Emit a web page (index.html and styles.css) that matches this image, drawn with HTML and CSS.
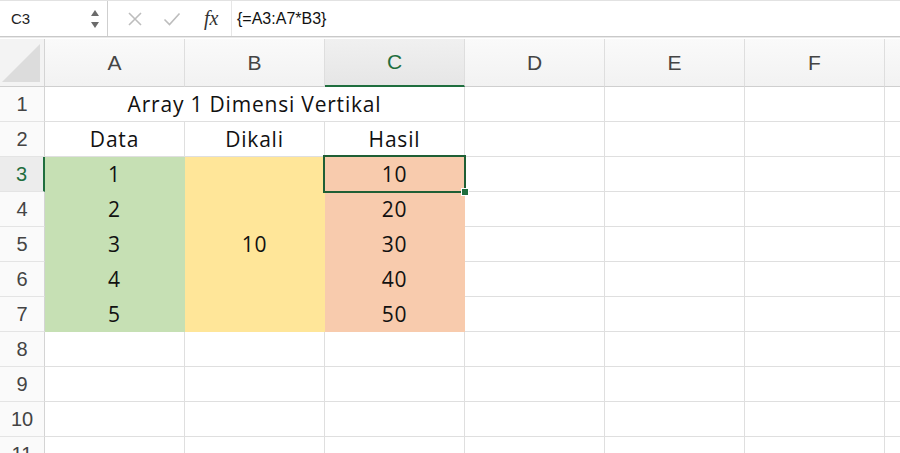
FILE: index.html
```html
<!DOCTYPE html>
<html lang="id">
<head>
    <meta charset="UTF-8">
    <title>Array 1 Dimensi Vertikal</title>
    <link rel="stylesheet" href="styles.css">
</head>
<body>

<div class="formula-bar">
    <div class="name-box">
        <span class="cell-ref">C3</span>
        <span class="spinner">
            <svg width="10" height="22" viewBox="0 0 10 22">
                <path d="M5 2 L9 8 L1 8 Z" fill="#6b6b6b"/>
                <path d="M5 20 L9 14 L1 14 Z" fill="#6b6b6b"/>
            </svg>
        </span>
    </div>
    <div class="bar-buttons">
        <svg class="btn-icon" width="16" height="16" viewBox="0 0 16 16">
            <path d="M2 2 L14 14 M14 2 L2 14" stroke="#bdbdbd" stroke-width="1.6" fill="none"/>
        </svg>
        <svg class="btn-icon" width="18" height="16" viewBox="0 0 18 16">
            <path d="M1.5 8.5 L6.5 13.5 L16.5 2.5" stroke="#bdbdbd" stroke-width="1.6" fill="none"/>
        </svg>
        <span class="fx">fx</span>
    </div>
    <div class="formula">{=A3:A7*B3}</div>
</div>

<div class="sheet">
    <div class="corner"><span class="corner-tri"></span></div>
    <div class="col-head">A</div>
    <div class="col-head">B</div>
    <div class="col-head active">C</div>
    <div class="col-head">D</div>
    <div class="col-head">E</div>
    <div class="col-head">F</div>
    <div class="col-head last"></div>

    <div class="row-head">1</div>
    <div class="cell title">Array 1 Dimensi Vertikal</div>
    <div class="cell"></div><div class="cell"></div><div class="cell"></div><div class="cell last"></div>

    <div class="row-head">2</div>
    <div class="cell">Data</div>
    <div class="cell">Dikali</div>
    <div class="cell">Hasil</div>
    <div class="cell"></div><div class="cell"></div><div class="cell"></div><div class="cell last"></div>

    <div class="row-head active">3</div>
    <div class="cell green">1</div>
    <div class="cell yellow merged">10</div>
    <div class="cell orange selected">10<span class="handle"></span></div>
    <div class="cell"></div><div class="cell"></div><div class="cell"></div><div class="cell last"></div>

    <div class="row-head">4</div>
    <div class="cell green">2</div>
    <div class="cell orange">20</div>
    <div class="cell"></div><div class="cell"></div><div class="cell"></div><div class="cell last"></div>

    <div class="row-head">5</div>
    <div class="cell green">3</div>
    <div class="cell orange">30</div>
    <div class="cell"></div><div class="cell"></div><div class="cell"></div><div class="cell last"></div>

    <div class="row-head">6</div>
    <div class="cell green">4</div>
    <div class="cell orange">40</div>
    <div class="cell"></div><div class="cell"></div><div class="cell"></div><div class="cell last"></div>

    <div class="row-head">7</div>
    <div class="cell green">5</div>
    <div class="cell orange">50</div>
    <div class="cell"></div><div class="cell"></div><div class="cell"></div><div class="cell last"></div>

    <div class="row-head">8</div>
    <div class="cell"></div><div class="cell"></div><div class="cell"></div><div class="cell"></div><div class="cell"></div><div class="cell"></div><div class="cell last"></div>

    <div class="row-head">9</div>
    <div class="cell"></div><div class="cell"></div><div class="cell"></div><div class="cell"></div><div class="cell"></div><div class="cell"></div><div class="cell last"></div>

    <div class="row-head">10</div>
    <div class="cell"></div><div class="cell"></div><div class="cell"></div><div class="cell"></div><div class="cell"></div><div class="cell"></div><div class="cell last"></div>

    <div class="row-head">11</div>
    <div class="cell"></div><div class="cell"></div><div class="cell"></div><div class="cell"></div><div class="cell"></div><div class="cell"></div><div class="cell last"></div>
</div>

</body>
</html>
```

FILE: styles.css
```css
body {
    margin: 0;
    padding: 0;
    background-color: #fff;
    font-family: "Liberation Sans", Arial, sans-serif;
    overflow: hidden;
}

/* formula bar */

.formula-bar {
    display: flex;
    align-items: center;
    height: 35px;
    border-top: 1px solid #e2e2e2;
    border-bottom: 1px solid #c9c9c9;
    box-shadow: 0 1px 0 #e9e9e9;
    background-color: #fff;
}

.name-box {
    display: flex;
    align-items: center;
    justify-content: space-between;
    width: 108px;
    height: 100%;
    padding: 0 7px 0 11px;
    box-sizing: border-box;
    border-right: 1px solid #cfcfcf;
}

.cell-ref {
    font-size: 15px;
    color: #222;
}

.spinner svg {
    display: block;
}

.bar-buttons {
    display: flex;
    align-items: center;
    width: 124px;
    height: 100%;
    padding-left: 19px;
    box-sizing: border-box;
    border-right: 1px solid #e6e6e6;
}

.btn-icon {
    margin-right: 20px;
}

.btn-icon + .btn-icon {
    margin-right: 23px;
}

.fx {
    font-family: "Liberation Serif", "Times New Roman", serif;
    font-style: italic;
    font-size: 20px;
    color: #333;
}

.formula {
    padding-left: 5px;
    font-size: 16px;
    color: #111;
}

/* sheet grid */

.sheet {
    display: grid;
    grid-template-columns: 45px repeat(6, 140px) 1fr;
    grid-template-rows: 48px repeat(11, 35px);
    margin-top: 2px;
}

.corner {
    position: relative;
    background-color: #f3f3f3;
    border-right: 1px solid #d4d4d4;
    border-bottom: 1px solid #cfcfcf;
}

.corner-tri {
    position: absolute;
    right: 4px;
    bottom: 4px;
    width: 0;
    height: 0;
    border-left: 38px solid transparent;
    border-bottom: 38px solid #dcdcdc;
}

.col-head {
    display: flex;
    align-items: center;
    justify-content: center;
    font-size: 21px;
    color: #444;
    background: linear-gradient(#fafafa, #f2f2f2);
    border-right: 1px solid #dedede;
    border-bottom: 1px solid #cfcfcf;
}

.col-head.active {
    color: #1f6e3e;
    background: linear-gradient(#f0f0f0, #e6e6e6);
    border-bottom: 2px solid #1f6e3e;
}

.col-head.last {
    border-right: none;
}

.row-head {
    display: flex;
    align-items: center;
    justify-content: center;
    font-size: 20px;
    color: #444;
    background-color: #fafafa;
    border-right: 1px solid #d4d4d4;
    border-bottom: 1px solid #e4e4e4;
}

.row-head.active {
    color: #1f6e3e;
    background-color: #ececec;
    border-right: 2px solid #1f6e3e;
}

.cell {
    display: flex;
    align-items: center;
    justify-content: center;
    font-family: "Open Sans", "Noto Sans", sans-serif;
    font-size: 21px;
    letter-spacing: 0.8px;
    color: #111;
    border-right: 1px solid #dfdfdf;
    border-bottom: 1px solid #dfdfdf;
}

.cell.last {
    border-right: none;
}

.title {
    grid-column: span 3;
}

.green {
    background-color: #c6e0b4;
    border-color: #c6e0b4;
}

.yellow {
    background-color: #ffe699;
    border-color: #ffe699;
}

.orange {
    background-color: #f8cbad;
    border-color: #f8cbad;
}

.merged {
    grid-row: span 5;
}

.selected {
    position: relative;
}

.selected::after {
    content: "";
    position: absolute;
    top: -2px;
    left: -2px;
    right: -2px;
    bottom: -2px;
    border: 2px solid #1f5f35;
}

.handle {
    position: absolute;
    right: -5px;
    bottom: -5px;
    width: 6px;
    height: 6px;
    background-color: #1f6e3e;
    border: 1px solid #fff;
    z-index: 2;
}
```
